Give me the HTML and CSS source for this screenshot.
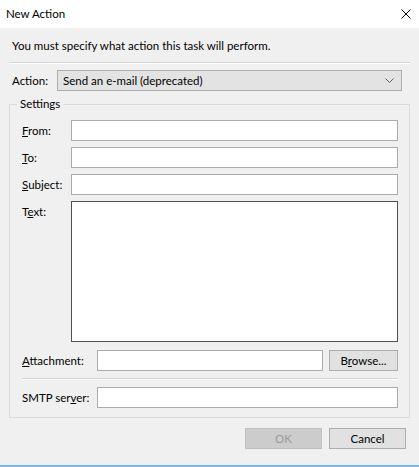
FILE: index.html
```html
<!DOCTYPE html>
<html>
<head>
    <title>New Action</title>
    <link rel="stylesheet" href="styles.css">
</head>
<body>
    <div class="dialog">
        <div class="titlebar">
            <span class="title">New Action</span>
            <svg class="close" width="10" height="10" viewBox="0 0 10 10">
                <path d="M0.5 0.5 L9.5 9.5 M9.5 0.5 L0.5 9.5" stroke="#000" stroke-width="1" fill="none"/>
            </svg>
        </div>

        <div class="body">
            <p class="prompt">You must specify what action this task will perform.</p>
            <div class="rule"></div>

            <div class="action-row">
                <span class="label">Act<u>i</u>on:</span>
                <div class="combo">
                    <span>Send an e-mail (deprecated)</span>
                    <svg width="9" height="5" viewBox="0 0 9 5">
                        <path d="M0.5 0.5 L4.5 4.5 L8.5 0.5" stroke="#606060" stroke-width="1" fill="none"/>
                    </svg>
                </div>
            </div>

            <fieldset class="settings">
                <legend>Settings</legend>

                <div class="field">
                    <span class="label"><u>F</u>rom:</span>
                    <input type="text" class="box">
                </div>
                <div class="field">
                    <span class="label"><u>T</u>o:</span>
                    <input type="text" class="box">
                </div>
                <div class="field">
                    <span class="label"><u>S</u>ubject:</span>
                    <input type="text" class="box">
                </div>
                <div class="field text-field">
                    <span class="label">T<u>e</u>xt:</span>
                    <textarea class="box"></textarea>
                </div>

                <div class="field wide">
                    <span class="label"><u>A</u>ttachment:</span>
                    <input type="text" class="box">
                    <button class="btn browse">B<u>r</u>owse...</button>
                </div>

                <div class="rule inner"></div>

                <div class="field wide">
                    <span class="label">SMTP ser<u>v</u>er:</span>
                    <input type="text" class="box">
                </div>
            </fieldset>

            <div class="buttons">
                <button class="btn ok" disabled>OK</button>
                <button class="btn">Cancel</button>
            </div>
        </div>

        <div class="accent"></div>
    </div>
</body>
</html>
```

FILE: styles.css
```css
body {
    margin: 0;
    font-family: Lato, "Open Sans", sans-serif;
    font-size: 11.5px;
    color: #000;
}
.dialog {
    width: 419px;
    height: 467px;
    display: flex;
    flex-direction: column;
    background: #f0f0f0;
}
.titlebar {
    height: 28px;
    background: #fff;
    display: flex;
    align-items: center;
    justify-content: space-between;
    padding: 0 8px 2px 6px;
    box-sizing: border-box;
}
.close {
    margin-top: 2px;
}
.body {
    flex: 1;
    padding: 10px 9px 0 9px;
    display: flex;
    flex-direction: column;
}
.prompt {
    margin: 0 0 0 3px;
    line-height: 16px;
}
.rule {
    height: 1px;
    background: #d4d4d4;
    border-bottom: 1px solid #fff;
    margin-top: 8px;
}
.action-row {
    display: flex;
    align-items: center;
    margin-top: 6px;
}
.action-row .label {
    width: 45px;
    padding-left: 3px;
}
.combo {
    width: 345px;
    height: 21px;
    box-sizing: border-box;
    border: 1px solid #adadad;
    background: #e3e3e3;
    display: flex;
    align-items: center;
    justify-content: space-between;
    padding: 0 7px 0 5px;
}
.settings {
    margin: 6px 0 0 0;
    padding: 9px 11px 9px 12px;
    border: 1px solid #dcdcdc;
    display: flex;
    flex-direction: column;
    gap: 6px;
}
.settings legend {
    margin-left: -5px;
    padding: 0 3px;
    line-height: 14px;
}
.field {
    display: flex;
    align-items: flex-start;
}
.field .label {
    width: 49px;
    line-height: 21px;
    flex-shrink: 0;
}
.wide .label {
    width: 75px;
}
.box {
    flex: 1;
    height: 21px;
    box-sizing: border-box;
    border: 1px solid #ababab;
    background: #fff;
    margin: 0;
    font: inherit;
    padding: 0 3px;
}
textarea.box {
    height: 141px;
    border-color: #505050;
    resize: none;
}
.text-field {
    margin-bottom: 2px;
}
.btn {
    height: 21px;
    box-sizing: border-box;
    border: 1px solid #adadad;
    background: #e1e1e1;
    font: inherit;
    color: #000;
    padding: 0;
    margin: 0;
}
.browse {
    width: 69px;
    margin-left: 6px;
}
.rule.inner {
    margin: 1px 0 1px 0;
}
.buttons {
    display: flex;
    justify-content: flex-end;
    gap: 7px;
    margin-top: 10px;
    padding-right: 4px;
}
.buttons .btn {
    width: 77px;
}
.btn.ok {
    background: #cccccc;
    border-color: #bfbfbf;
    color: #9a9a9a;
}
.accent {
    height: 2px;
    background: #7ab8ea;
}
```
